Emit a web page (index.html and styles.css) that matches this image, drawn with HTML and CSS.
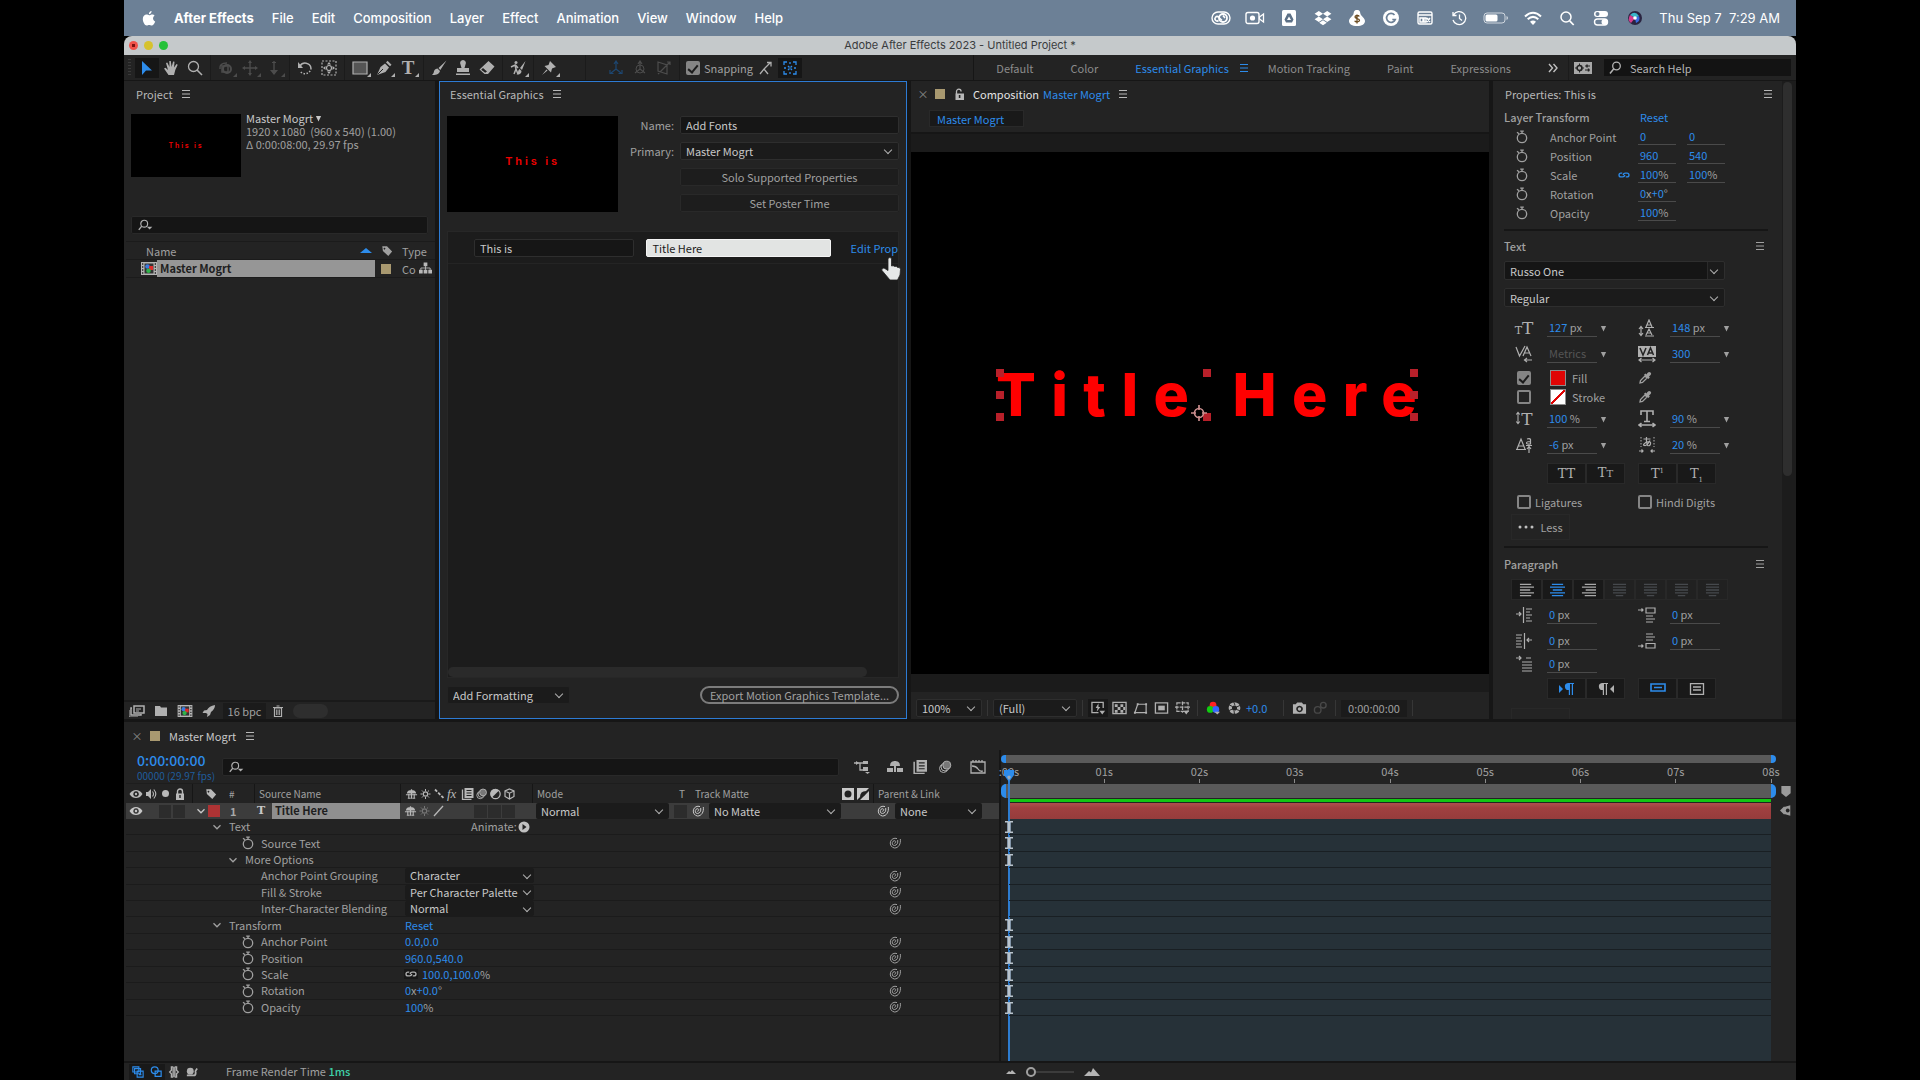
FILE: index.html
```html
<!DOCTYPE html>
<html lang="en">
<head>
  <meta charset="UTF-8" />
  <meta name="viewport" content="width=device-width, initial-scale=1.0" />
  <title>Adobe After Effects 2023 - Untitled Project *</title>
  <link rel="stylesheet" href="styles.css">
</head>
<body>

  <!-- Icon sprite -->
  <svg class="sprite" aria-hidden="true">
    <symbol id="i-menu" viewBox="0 0 10 10"><path d="M1 1.5h8M1 5h8M1 8.5h8" stroke="currentColor" stroke-width="1.2"/></symbol>
    <symbol id="i-search" viewBox="0 0 20 14"><circle cx="8" cy="5.5" r="3.8" fill="none" stroke="currentColor" stroke-width="1.3"/><path d="M5.3 8.3 2 12.5" stroke="currentColor" stroke-width="1.5"/><path d="M11 9h6l-3 3z" fill="currentColor"/></symbol>
    <symbol id="i-glass" viewBox="0 0 14 14"><circle cx="8.5" cy="5" r="3.8" fill="none" stroke="currentColor" stroke-width="1.3"/><path d="M5.8 7.8 2 12.5" stroke="currentColor" stroke-width="1.5"/></symbol>
    <symbol id="i-chev" viewBox="0 0 10 10"><path d="M1.5 3.2 5 6.8l3.5-3.6" fill="none" stroke="currentColor" stroke-width="1.3"/></symbol>
    <symbol id="i-tri" viewBox="0 0 8 8"><path d="M1 1h6L4 7.5z" fill="currentColor"/></symbol>
    <symbol id="i-tag" viewBox="0 0 14 14"><path fill-rule="evenodd" d="M1.5 1.5H7l6 6.2-4.5 5L2.2 7zM4 3.2a1 1 0 1 0 .1 0z" fill="currentColor"/></symbol>
    <symbol id="i-watch" viewBox="0 0 14 14"><circle cx="7" cy="8" r="4.7" fill="none" stroke="currentColor" stroke-width="1.3"/><path d="M5.2 1.2h3.6M7 1v2.5M2 2.2l2 1.6" stroke="currentColor" stroke-width="1.3"/></symbol>
    <symbol id="i-link" viewBox="0 0 16 10"><path d="M6 2.8H4.5a2.2 2.2 0 0 0 0 4.4h2q2 0 2.5-2.2M10 7.2h1.5a2.2 2.2 0 0 0 0-4.4h-2q-2 0-2.5 2.2" fill="none" stroke="currentColor" stroke-width="1.5"/></symbol>
    <symbol id="i-whip" viewBox="0 0 14 14"><path d="M9 2.6A4.9 4.9 0 1 0 6.5 12C10.500 12 13 8 12.300 3M6.300 7.300C8.500 7 8 4.500 6.300 4.700 3.300 5.200 3.800 9.700 6.500 9.500 9 9.300 10.200 7 9.700 4" fill="none" stroke="currentColor"/></symbol>
    <symbol id="i-eye" viewBox="0 0 14 10"><path fill-rule="evenodd" d="M.5 5C2.500 2 4.500 1 7 1s4.500 1 6.500 4C11.500 8 9.500 9 7 9S2.500 8 .5 5zM7 2.200a2.800 2.800 0 1 0 .1 0z" fill="currentColor"/><circle cx="7" cy="5" r="1.2" fill="currentColor"/></symbol>
    <symbol id="i-lock" viewBox="0 0 12 12"><path d="M3.500 6V3.500a2.500 2.500 0 0 1 5 0V6" fill="none" stroke="currentColor" stroke-width="1.4"/><path fill-rule="evenodd" d="M2 5.500h8V12H2zM5.300 7v3h1.400V7z" fill="currentColor"/></symbol>
    <symbol id="i-unlock" viewBox="0 0 12 12"><path d="M3.500 6V3.500a2.300 2.300 0 0 1 4.600 0" fill="none" stroke="currentColor" stroke-width="1.3"/><path fill-rule="evenodd" d="M2.500 5.500H11V12H2.500zM5.800 7v3h1.600V7z" fill="currentColor"/></symbol>
    <symbol id="i-speaker" viewBox="0 0 12 12"><path d="M1 4h2l3-3v10L3 8H1z" fill="currentColor"/><path d="M7.500 3.500q2 2.500 0 5M8.800 1.500q4 4.500 0 9" fill="none" stroke="currentColor" stroke-width="1.1"/></symbol>
    <symbol id="i-shy" viewBox="0 0 14 12"><path d="M2 5.500C2 .5 12 .5 12 5.500zM1 6.300h12v1H1zM6.300 1h1.400v10H6.300zM3 10h3v1.200H3zM8 10h3v1.200H8zM3.500 6h1.200v4H3.500zM9.300 6h1.200v4H9.300z" fill="currentColor"/></symbol>
    <symbol id="i-sun" viewBox="0 0 12 12"><circle cx="6" cy="6" r="2.2" fill="none" stroke="currentColor" stroke-width="1.2"/><path d="M6 1v2M6 9v2M1 6h2M9 6h2M2.500 2.500l1.300 1.300M8.200 8.200l1.300 1.300M9.500 2.500 8.200 3.800M3.800 8.200 2.500 9.500" stroke="currentColor"/></symbol>
    <symbol id="i-slash" viewBox="0 0 12 12"><path d="M1.500 11 10.500 1" stroke="currentColor" stroke-width="1.3"/></symbol>
    <symbol id="i-bslash" viewBox="0 0 12 12"><path d="m1.500 1.500 9 9" stroke="currentColor" stroke-width="1.8" stroke-dasharray="3 1.5"/></symbol>
    <symbol id="i-film" viewBox="0 0 12 12"><path fill-rule="evenodd" d="M3 0h9v10H3zM5 2v1h5V2zM5 4.500v1h5v-1zM5 7v1h5V7z" fill="currentColor"/><path d="M1 1.500v10h9" fill="none" stroke="currentColor" stroke-width="1.3"/></symbol>
    <symbol id="i-blur" viewBox="0 0 14 14"><circle cx="5.5" cy="8.5" r="4" fill="none" stroke="currentColor"/><circle cx="7" cy="7" r="4" fill="#232323" stroke="currentColor"/><circle cx="8.8" cy="5.2" r="4" fill="#777" stroke="currentColor"/></symbol>
    <symbol id="i-adjust" viewBox="0 0 12 12"><circle cx="6" cy="6" r="4.7" fill="none" stroke="currentColor" stroke-width="1.2"/><path d="M9.300 2.700A4.700 4.700 0 1 0 2.700 9.300z" fill="currentColor"/></symbol>
    <symbol id="i-cube" viewBox="0 0 12 12"><path d="m6 1 4.500 2v5.500L6 11 1.500 8.500V3zM1.500 3 6 5.200 10.500 3M6 5.200V11" fill="none" stroke="currentColor" stroke-width="1.2"/></symbol>
    <symbol id="i-comp" viewBox="0 0 16 13"><path d="M0 0h16v13H0z" fill="#b5b5b5"/><path d="M3.500 1.500h9v10h-9z" fill="#333"/><path d="M1 2h1.300M1 5h1.300M1 8h1.300M1 11h1.300M13.700 2H15M13.700 5H15M13.700 8H15M13.700 11H15" stroke="#222" stroke-width="1.5"/><circle cx="6.5" cy="4.5" r="2.3" fill="#3a7be0"/><path d="M8 4h4v4H8z" fill="#e02b2b"/><circle cx="7.5" cy="8.7" r="2.3" fill="#2fb34a"/></symbol>
    <symbol id="i-dropper" viewBox="0 0 14 14"><path d="m2 12 .5-2.500L7 5l2 2-4.500 4.500z" fill="none" stroke="currentColor" stroke-width="1.3"/><path d="M6 3.800 7.500 2.500l1 1C9.500 1.500 11 .3 12.500 1.600s.2 3-1.500 3.900l.8.900-1.500 1.500z" fill="currentColor"/></symbol>
    <symbol id="i-al" viewBox="0 0 16 14"><path d="M1 1h12M1 4h15M1 7h11M1 10h15M1 13h12" stroke="currentColor" stroke-width="1.4"/></symbol>
    <symbol id="i-ac" viewBox="0 0 16 14"><path d="M2 1h12M0 4h16M3 7h10M0 10h16M2 13h12" stroke="currentColor" stroke-width="1.4"/></symbol>
    <symbol id="i-ar" viewBox="0 0 16 14"><path d="M4 1h12M1 4h15M5 7h11M1 10h15M4 13h12" stroke="currentColor" stroke-width="1.4"/></symbol>
    <symbol id="i-aj" viewBox="0 0 16 14"><path d="M1 1h14M1 4h14M1 7h14M1 10h14M4 13h8" stroke="currentColor" stroke-width="1.4"/></symbol>
    <symbol id="i-key" viewBox="0 0 8 14"><path d="M2.500 2h3v10h-3z" fill="#6f9fd6"/><path d="M0 1h3.500l.5 1 .5-1H8v1.500H5.500v9H8V13H4.500L4 12l-.5 1H0v-1.500h2.500v-9H0z" fill="#b9c3cc"/></symbol>
  </svg>

  <div class="screen">

    <!-- macOS menu bar -->
    <header class="menubar">
      <nav class="menubar-left">
        <svg class="apple" viewBox="0 0 14 17"><path d="M9.600 1c.1 1.600-1.200 3.100-2.700 3.200C6.700 2.600 8.200 1.100 9.600 1zM12.600 5.800c-2.300 1.400-1.900 4.700.6 5.600-.7 2-2 4.200-3.500 4.200-1 0-1.400-.6-2.500-.6s-1.600.6-2.500.6C2.700 15.600.8 12 .8 9.100c0-3 1.900-4.500 3.700-4.500 1.100 0 2 .7 2.700.7.700 0 1.700-.8 3.100-.8.900 0 1.800.5 2.300 1.300z" fill="#fff"/></svg>
        <a href="#" class="app-name">After Effects</a>
        <a href="#">File</a>
        <a href="#">Edit</a>
        <a href="#">Composition</a>
        <a href="#">Layer</a>
        <a href="#">Effect</a>
        <a href="#">Animation</a>
        <a href="#">View</a>
        <a href="#">Window</a>
        <a href="#">Help</a>
      </nav>
      <div class="menubar-right">
        <svg viewBox="0 0 20 16"><rect x="1" y="2" width="18" height="12" rx="6" fill="none" stroke="#fff" stroke-width="1.4"/><circle cx="12" cy="8" r="4" fill="none" stroke="#fff" stroke-width="1.8"/><path d="M11 10.500 7.500 7a2.200 2.200 0 1 0 0 3.500M12 5.500l2 2.500" fill="none" stroke="#fff" stroke-width="1.6"/></svg>
        <svg viewBox="0 0 20 16"><rect x="1" y="2.5" width="13" height="11" rx="2" fill="none" stroke="#fff" stroke-width="1.4"/><circle cx="7.5" cy="8" r="2.6" fill="#fff"/><path d="m14.500 7 4-3v8l-4-3z" fill="none" stroke="#fff" stroke-width="1.3"/></svg>
        <svg viewBox="0 0 20 16"><rect x="3" y="0" width="14" height="16" rx="1.5" fill="#fff"/><path d="M8.500 3.500h3l3 6-1.500 3H7l-1.500-3zM10 6.500 8 10h4z" fill="#5c7086" fill-rule="evenodd"/></svg>
        <svg viewBox="0 0 20 16"><path d="m5.800 1 4.200 2.700-4.200 2.700-4.200-2.700zM14.200 1l4.200 2.700-4.200 2.700L10 3.700zM5.800 6.500 10 9.200l-4.200 2.700-4.200-2.700zM14.200 6.500l4.200 2.700-4.200 2.700L10 9.200zM10 10.200l3.800 2.500L10 15.200l-3.800-2.500z" fill="#fff"/></svg>
        <svg viewBox="0 0 20 16"><path d="M10 0c3 0 3 2 3.500 4S18 8 18 11s-3 5-8 5-8-2-8-5 4-5 4.500-7S7 0 10 0z" fill="#fff"/><path d="M12.300 6.500C11.500 5 8 5.200 8 7s4.500 1.300 4.500 3.300-4 2.200-4.800.5M10 4.500v9" fill="none" stroke="#6b4c22" stroke-width="1.3"/></svg>
        <svg viewBox="0 0 20 16"><circle cx="10" cy="8" r="8" fill="#fff"/><path d="M13.500 5a4.500 4.500 0 1 0 .8 4.500h-3" fill="none" stroke="#6c8096" stroke-width="1.7"/></svg>
        <svg viewBox="0 0 20 16"><rect x="3" y="2" width="14" height="12" rx="1.5" fill="none" stroke="#fff" stroke-width="1.4"/><path d="M3 5h14M5 8h3v4H5zM9 8h2v4H9zM12 8l3 4M15 8l-3 4" fill="none" stroke="#fff" stroke-width="1.4"/></svg>
        <svg viewBox="0 0 20 16"><path d="M4.500 5A6.500 6.500 0 1 1 4 10M4 2v3.500h3.500M10.500 4.500V8.500l2.500 2" fill="none" stroke="#fff" stroke-width="1.3"/></svg>
        <svg class="battery" viewBox="0 0 26 12"><rect x="1" y="1" width="21" height="10" rx="3" fill="none" stroke="#cfd6de"/><rect x="2.5" y="2.5" width="12" height="7" rx="1.5" fill="#fff"/><path d="M23.500 4v4q1.500-.5 1.500-2t-1.500-2z" fill="#cfd6de"/></svg>
        <svg viewBox="0 0 20 16"><path d="M2 6.500q8-7.500 16 0M4.700 9.300q5.300-4.800 10.600 0" fill="none" stroke="#fff" stroke-width="2"/><path d="m10 15-3-3.300q3-2.200 6 0z" fill="#fff"/></svg>
        <svg viewBox="0 0 20 16"><circle cx="9" cy="7" r="5" fill="none" stroke="#fff" stroke-width="1.5"/><path d="m12.700 10.800 4 4.200" stroke="#fff" stroke-width="1.7"/></svg>
        <svg viewBox="0 0 20 16"><rect x="3" y="1" width="14" height="6" rx="3" fill="#fff"/><circle cx="6.5" cy="4" r="2" fill="#6c8096"/><rect x="3.5" y="9" width="13" height="6" rx="3" fill="none" stroke="#fff" stroke-width="1.4"/><circle cx="13.5" cy="12" r="3" fill="#fff"/></svg>
        <svg viewBox="0 0 20 16"><circle cx="10" cy="8" r="7" fill="#2a2440"/><path d="M5 5q5-5 9 1L10 8z" fill="#39b6c9"/><path d="M5 5q-3 5 1 8l4-5z" fill="#d43b8b"/><path d="M14 6q2 5-3 7L10 8z" fill="#3a6be0"/><circle cx="10" cy="8" r="1.8" fill="#fff"/></svg>
        <time>Thu Sep 7&nbsp; 7:29 AM</time>
      </div>
    </header>

    <div class="app">

      <div class="titlebar">
        <div class="lights"><i class="light red"></i><i class="light yellow"></i><i class="light green"></i></div>
        <h1>Adobe After Effects 2023 - Untitled Project *</h1>
      </div>

      <!-- Tools + workspaces -->
      <div class="toolbar">
        <div class="tools">
          <span class="grip"></span>
          <button class="tool on" aria-label="Selection"><svg viewBox="0 0 16 16"><path d="M3 1v14l4-4.500h6z" fill="#2d8ceb"/></svg></button>
          <button class="tool" aria-label="Hand"><svg viewBox="0 0 16 16"><path d="M5.500 15 1 8.500l1.500-.8L5 10 3 3l1.300-.5L6.500 7 6.300 1h1.500L8.600 7l1.500-5.500 1.400.3L11 7.500l2.500-3.500 1.200.7L12.300 10 11 15z" fill="currentColor"/></svg></button>
          <button class="tool" aria-label="Zoom"><svg viewBox="0 0 16 16"><circle cx="6.5" cy="6.5" r="5" fill="none" stroke="currentColor" stroke-width="1.3"/><path d="m10 10 5 5" stroke="currentColor" stroke-width="1.6"/></svg></button>
          <i class="sep"></i>
          <button class="tool off corner" aria-label="Orbit"><svg viewBox="0 0 16 16"><circle cx="9" cy="9" r="4" fill="none" stroke="currentColor" stroke-width="2"/><path d="M2 9q-1-6 7-6M4 6h6v6H4z" fill="none" stroke="currentColor" stroke-width="1.5"/></svg></button>
          <button class="tool off corner" aria-label="Pan"><svg viewBox="0 0 16 16"><path d="M8 0 6 3h4zM8 16l2-3H6zM0 8l3 2V6zM16 8l-3-2v4zM7.300 3h1.400v10H7.300zM3 7.300h10v1.400H3z" fill="currentColor"/></svg></button>
          <button class="tool off corner" aria-label="Dolly"><svg viewBox="0 0 16 16"><path d="M7.300 1h1.400v10H7.300zM4 10h8l-4 5zM6 2h4v1H6z" fill="currentColor"/></svg></button>
          <i class="sep"></i>
          <button class="tool" aria-label="Rotate"><svg viewBox="0 0 16 16"><path d="M3 6a6 6 0 0 1 11 2" fill="none" stroke="currentColor" stroke-width="1.5"/><path d="M1 2v6h5z" fill="currentColor"/><path d="M14 8a6 6 0 0 1-11 3" fill="none" stroke="currentColor" stroke-width="1.5" stroke-dasharray="1.5 1.5"/></svg></button>
          <button class="tool" aria-label="Pan Behind"><svg viewBox="0 0 16 16"><path d="M1 1h14v14H1z" fill="none" stroke="currentColor" stroke-width="1.2" stroke-dasharray="2 1.5"/><circle cx="8" cy="8" r="2.5" fill="none" stroke="currentColor" stroke-width="1.2"/><path d="m8 2 2 2.500H6zM8 14l2-2.500H6zM2 8l2.500 2V6zM14 8l-2.500 2V6z" fill="currentColor"/></svg></button>
          <i class="sep"></i>
          <button class="tool corner" aria-label="Rectangle"><svg viewBox="0 0 16 16"><path d="M1 2h14v12H1z" fill="#555" stroke="currentColor" stroke-width="1.2"/></svg></button>
          <button class="tool corner" aria-label="Pen"><svg viewBox="0 0 16 16"><path d="M1 15 4.500 7 9 3.500 13 7.500 9.500 12z" fill="currentColor"/><path d="M1.500 14.500 7 9" stroke="#232323"/><path d="m10 2.500 1.500-1.800 4 4L14 6.200z" fill="currentColor"/></svg></button>
          <button class="tool corner glyph" aria-label="Type">T</button>
          <i class="sep"></i>
          <button class="tool" aria-label="Brush"><svg viewBox="0 0 16 16"><path d="m15.500.5-8 7.500 1.800 2zM6.500 8.500 9 11c-1 4-5 4-8 4 2-1.500 1.500-3 2.500-5q1.200-1.500 3-1.500z" fill="currentColor"/></svg></button>
          <button class="tool" aria-label="Clone Stamp"><svg viewBox="0 0 16 16"><path d="M8 0a3 3 0 0 1 2.500 4.500L9.500 8H14v4H2V8h4.500l-1-3.500A3 3 0 0 1 8 0zM1 13.500h14V15H1z" fill="currentColor"/></svg></button>
          <button class="tool" aria-label="Eraser"><svg viewBox="0 0 16 16"><path d="m9.500 1 6 5.500L9 14H5.500L.5 9.500zM4 8l-1.800 1.700 4 3L8 11.500z" fill="currentColor" fill-rule="evenodd"/></svg></button>
          <i class="sep"></i>
          <button class="tool corner" aria-label="Roto Brush"><svg viewBox="0 0 16 16"><circle cx="6" cy="2.5" r="1.5" fill="currentColor"/><path d="m1 7 4-2 1 4-2 5M5.500 5 8 8M6 9l2 5" fill="none" stroke="currentColor" stroke-width="1.5"/><path d="M15.500 1 10 8l2 2zM9.500 9l2 2c0 3-3 4-5 3.500 2-1 1-4 3-5.500z" fill="currentColor"/></svg></button>
          <i class="sep"></i>
          <button class="tool corner" aria-label="Puppet Pin"><svg viewBox="0 0 16 16"><path d="m9 1 6 6-1.500.5L11 8.500l-1 4L3.500 6l4-1zM5.500 9.500 1 15l5.500-4.500z" fill="currentColor"/></svg></button>
          <i class="sep far"></i>
          <button class="tool off blue" aria-label="Local Axis"><svg viewBox="0 0 16 16"><path d="M8 9V2M8 9l-5 4M8 9l5 4M6 4l2-3 2 3M2 10v3.500h3.500M14 10v3.500h-3.500" fill="none" stroke="currentColor" stroke-width="1.2"/></svg></button>
          <button class="tool off" aria-label="World Axis"><svg viewBox="0 0 16 16"><circle cx="8" cy="9" r="4" fill="none" stroke="currentColor"/><path d="M8 9V2M8 9l-5 4M8 9l5 4M6 4l2-3 2 3" fill="none" stroke="currentColor" stroke-width="1.2"/></svg></button>
          <button class="tool off" aria-label="View Axis"><svg viewBox="0 0 16 16"><path d="M2 2v9l9 3V5zM2 14 14 2M11 2h3v3" fill="none" stroke="currentColor" stroke-width="1.2"/></svg></button>
          <i class="sep"></i>
          <label class="check snapping"><input type="checkbox" checked> Snapping</label>
          <button class="tool" aria-label="Snap Edges"><svg viewBox="0 0 16 16"><path d="m2 14 4-5 4 5M6 9l6-6M9 2.500h4v4" fill="none" stroke="currentColor" stroke-width="1.3"/></svg></button>
          <button class="tool on" aria-label="Snap Inside"><svg viewBox="0 0 16 16"><path d="M2 5V2h3M11 2h3v3M14 11v3h-3M5 14H2v-3M6 6l1.500 1.500M10 6 8.500 7.500M6 10l1.500-1.500M10 10 8.500 8.500M2 8h2M12 8h2M8 2v2M8 12v2" fill="none" stroke="#2d8ceb" stroke-width="1.3"/></svg></button>
        </div>
        <nav class="workspaces">
          <a href="#">Default</a>
          <a href="#">Color</a>
          <a href="#" class="active">Essential Graphics <svg class="ic-menu"><use href="#i-menu"/></svg></a>
          <a href="#">Motion Tracking</a>
          <a href="#">Paint</a>
          <a href="#">Expressions</a>
          <button class="more" aria-label="More workspaces"><svg viewBox="0 0 10 10"><path d="m1 1 3.500 4L1 9M5.500 1 9 5 5.500 9" fill="none" stroke="currentColor" stroke-width="1.4"/></svg></button>
        </nav>
        <div class="help">
          <svg class="sync" viewBox="0 0 18 12"><path d="M0 0h18v12H0z" fill="#a8a8a8"/><circle cx="5.5" cy="6" r="2.5" fill="none" stroke="#222" stroke-width="1.7"/><path d="M5.500 1.500v9M1 6h9" stroke="#222" stroke-dasharray="1.5 6"/><path d="M11 4h5M11 8h5" stroke="#222" stroke-width="1.2"/><path d="M13 2.500v3M14.500 6.500v3" stroke="#222" stroke-width="1.5"/></svg>
          <label class="help-search"><svg class="ic-14"><use href="#i-glass"/></svg><input type="text" value="Search Help" aria-label="Search Help"></label>
        </div>
      </div>

      <div class="workspace">

        <!-- Project panel -->
        <section class="panel project">
          <div class="tab">Project <svg class="ic-menu"><use href="#i-menu"/></svg></div>
          <div class="project-info">
            <div class="thumb"><span>This is</span></div>
            <div class="info-lines">
              <p class="bright">Master Mogrt<svg class="ic-7"><use href="#i-tri"/></svg></p>
              <p>1920 x 1080&nbsp; (960 x 540) (1.00)</p>
              <p>&Delta; 0:00:08:00, 29.97 fps</p>
            </div>
          </div>
          <label class="searchbox"><svg class="ic-search"><use href="#i-search"/></svg><input type="text" aria-label="Search project"></label>
          <table class="files">
            <thead>
              <tr><th class="c-name"><div>Name<i class="sort"></i></div></th><th class="c-tag"><svg class="ic-12"><use href="#i-tag"/></svg></th><th class="c-type">Type</th></tr>
            </thead>
            <tbody>
              <tr>
                <td class="c-name"><div class="file"><svg class="ic-comp"><use href="#i-comp"/></svg><b>Master Mogrt</b></div></td>
                <td class="c-tag"><i class="swatch"></i></td>
                <td class="c-type"><div class="clip"><span>Co</span><svg class="flow" viewBox="0 0 14 12"><path d="M5 0h4v4H5zM0 8h4v4H0zM5 8h4v4H5zM10 8h4v4h-4z" fill="currentColor"/><path d="M7 4v4M2 8V6h10v2" fill="none" stroke="currentColor"/></svg></div></td>
              </tr>
            </tbody>
          </table>
          <div class="project-foot">
            <button aria-label="Interpret Footage"><svg viewBox="0 0 16 12"><path d="M5 1h10v7H5zM3 3H2v7h10V9" fill="none" stroke="currentColor" stroke-width="1.5"/><path d="M7 4h5M7 6h3M0 5v7h9" fill="none" stroke="currentColor"/></svg></button>
            <button aria-label="New Folder"><svg viewBox="0 0 16 12"><path d="M2 1h5l1 1.500h6V11H2z" fill="currentColor"/></svg></button>
            <button aria-label="New Composition"><svg><use href="#i-comp"/></svg></button>
            <button aria-label="Adjust"><svg viewBox="0 0 16 12"><path d="M14 0Q8 1 6 5L3 5.500 1.500 8 5 8l1.500 1L6 12l3-2 1-3q4-3 4-7z" fill="currentColor"/></svg></button>
            <button class="depth">16 bpc</button>
            <button aria-label="Delete"><svg viewBox="0 0 16 12"><path d="M4.500 3h7v8.500h-7zM3 2.500h10M6.500 1h3M6.800 4.500V10M9.200 4.500V10" fill="none" stroke="currentColor" stroke-width="1.2"/></svg></button>
            <i class="pill"></i>
          </div>
        </section>

        <!-- Essential Graphics panel -->
        <section class="panel graphics">
          <div class="tab">Essential Graphics <svg class="ic-menu"><use href="#i-menu"/></svg></div>
          <div class="graphics-head">
            <div class="thumb big"><span>This is</span></div>
            <div class="graphics-form">
              <label for="gname">Name:</label>
              <input id="gname" type="text" class="field" value="Add Fonts">
              <label for="gprimary">Primary:</label>
              <span class="select"><select id="gprimary"><option>Master Mogrt</option></select></span>
              <button class="wide">Solo Supported Properties</button>
              <button class="wide">Set Poster Time</button>
            </div>
          </div>
          <div class="graphics-list">
            <div class="graphics-item">
              <input type="text" class="field" value="This is" aria-label="Property name">
              <input type="text" class="field light" value="Title Here" aria-label="Source text">
              <a href="#">Edit Prop</a>
              <svg class="cursor" viewBox="0 0 22 26"><path d="M8 2.500q2-2 3.500 0V10q2-.8 3 .5 2-.7 3 .9 2.800-.5 3 2l-.5 5.600-2.500 5H10L2 14.500q-1-2.500 2-2.500l4 2.500z" fill="#e6e8e8" stroke="#222" stroke-width=".8"/></svg>
            </div>
            <i class="hscroll"></i>
          </div>
          <div class="graphics-foot">
            <span class="select"><select aria-label="Add Formatting"><option>Add Formatting</option></select></span>
            <button class="export">Export Motion Graphics Template...</button>
          </div>
        </section>

        <!-- Composition viewer -->
        <section class="panel comp">
          <div class="tab">
            <button class="close" aria-label="Close">×</button>
            <i class="swatch"></i>
            <svg class="ic-12"><use href="#i-unlock"/></svg>
            <span class="white">Composition</span> <a href="#">Master Mogrt</a>
            <svg class="ic-menu"><use href="#i-menu"/></svg>
          </div>
          <div class="comp-nav"><button>Master Mogrt</button></div>
          <div class="viewer">
            <div class="canvas">
              <div class="title-layer">
                Title Here
                <i class="h tl"></i><i class="h tc"></i><i class="h tr"></i><i class="h ml"></i><i class="h mr"></i><i class="h bl"></i><i class="h bc"></i><i class="h br"></i>
              </div>
              <svg class="anchor" viewBox="0 0 18 18"><circle cx="9" cy="9" r="4.5" fill="none" stroke="#c98d8d" stroke-width="1.7"/><path d="M9 1v5M9 12v5M1 9h5M12 9h5" stroke="#c98d8d" stroke-width="1.7"/></svg>
            </div>
          </div>
          <div class="comp-foot">
            <span class="select w66"><select aria-label="Magnification"><option>100%</option></select></span>
            <i class="sep"></i>
            <span class="select w84"><select aria-label="Resolution"><option>(Full)</option></select></span>
            <i class="sep"></i>
            <div class="comp-icons">
              <button class="dark" aria-label="Fast Previews"><svg viewBox="0 0 16 14"><path d="M13 7V1H1v11h7" fill="none" stroke="currentColor" stroke-width="1.4"/><path d="M8 2 5 7h2l-1 4 4-5H8zM9 10h6l-3 4z" fill="currentColor"/></svg></button>
              <button aria-label="Transparency Grid"><svg viewBox="0 0 16 14"><path d="M1 1h14v12H1z" fill="none" stroke="currentColor" stroke-width="1.4"/><path d="M3 3h3v3H3zM9 3h3v3H9zM6 6h3v3H6zM12 6h2v3h-2zM3 9h3v3H3zM9 9h3v3H9z" fill="currentColor"/></svg></button>
              <button aria-label="Mask Visibility"><svg viewBox="0 0 16 14"><path d="M2 12 5 3h9v9z" fill="none" stroke="currentColor" stroke-width="1.3"/><path d="M4 2h2v2H4zM13 2h2v2h-2zM1 11h2v2H1zM13 11h2v2h-2z" fill="currentColor"/></svg></button>
              <button aria-label="Region"><svg viewBox="0 0 16 14"><path d="M1.500 1.500h13v11h-13z" fill="none" stroke="currentColor" stroke-width="1.4"/><path d="M4.500 4.500h7v5h-7z" fill="currentColor"/></svg></button>
              <button aria-label="Guides"><svg viewBox="0 0 16 14"><path d="M2 1.500h12v9H2zM8 0v12M0 6h16" fill="none" stroke="currentColor" stroke-width="1.3" stroke-dasharray="4 1"/><path d="M9 10h6l-3 4z" fill="currentColor"/></svg></button>
            </div>
            <i class="sep"></i>
            <div class="comp-icons">
              <button aria-label="Channels"><svg viewBox="0 0 16 14"><circle cx="7.5" cy="4" r="3.6" fill="#f22"/><circle cx="4.5" cy="8.5" r="3.6" fill="#1c1"/><circle cx="10.5" cy="8.5" r="3.6" fill="#36f"/><path d="M9 11h6l-3 3z" fill="currentColor"/></svg></button>
              <button aria-label="Reset Exposure"><svg viewBox="0 0 16 14"><circle cx="8" cy="7" r="4.5" fill="none" stroke="currentColor" stroke-width="3.5"/><path d="m7 0 1.500 4M14.500 4 10 6M14 10l-4-1.500M8 14 7.500 10M1.500 10 6 8M2 3.500 6 5.500" stroke="#232323"/></svg></button>
            </div>
            <a href="#" class="exposure">+0.0</a>
            <i class="sep"></i>
            <div class="comp-icons">
              <button aria-label="Take Snapshot"><svg viewBox="0 0 16 14"><path fill-rule="evenodd" d="M1 3h3l1.500-2h5L12 3h3v10H1zM8 4.500a3.500 3.500 0 1 0 .1 0z" fill="currentColor"/><circle cx="8" cy="8" r="1.8" fill="currentColor"/></svg></button>
              <button class="dim" aria-label="Show Snapshot"><svg viewBox="0 0 16 14"><circle cx="5" cy="9" r="3.5" fill="none" stroke="currentColor" stroke-width="1.5"/><circle cx="11" cy="4" r="3" fill="none" stroke="currentColor" stroke-width="1.5"/></svg></button>
            </div>
            <i class="sep"></i>
            <button class="timebox">0:00:00:00</button>
            <i class="sep"></i>
          </div>
        </section>

        <!-- Properties panel -->
        <section class="panel props">
          <div class="props-body">
            <div class="tab">Properties: This is <svg class="ic-menu"><use href="#i-menu"/></svg></div>
            <div class="xform">
              <h2>Layer Transform</h2><a href="#">Reset</a>
              <div class="xrow"><svg class="ic-14"><use href="#i-watch"/></svg><span>Anchor Point</span><i></i><b>0</b><b>0</b></div>
              <div class="xrow"><svg class="ic-14"><use href="#i-watch"/></svg><span>Position</span><i></i><b>960</b><b>540</b></div>
              <div class="xrow"><svg class="ic-14"><use href="#i-watch"/></svg><span>Scale</span><svg class="ic-link"><use href="#i-link"/></svg><b>100<em>%</em></b><b>100<em>%</em></b></div>
              <div class="xrow"><svg class="ic-14"><use href="#i-watch"/></svg><span>Rotation</span><i></i><b>0<em>x</em>+0<em>°</em></b></div>
              <div class="xrow"><svg class="ic-14"><use href="#i-watch"/></svg><span>Opacity</span><i></i><b>100<em>%</em></b></div>
            </div>
            <div class="section-head">Text <svg class="ic-menu"><use href="#i-menu"/></svg></div>
            <span class="select font split"><select aria-label="Font"><option>Russo One</option></select></span>
            <span class="select font"><select aria-label="Font style"><option>Regular</option></select></span>
            <div class="chars">
              <span class="gi"><small>T</small><big>T</big></span><b>127 <em>px</em></b><svg class="ic-7"><use href="#i-tri"/></svg>
              <svg class="gi" viewBox="0 0 18 18"><path d="M3 8v8M1 10l2-2.500L5 10M1 14l2 2.500L5 14M8 8l3-7 3 7M9 6h4M7 8.500h9M8 16l3-6 3 6M9 14h4M7 17h9" fill="none" stroke="currentColor" stroke-width="1.2"/></svg><b>148 <em>px</em></b><svg class="ic-7"><use href="#i-tri"/></svg>

              <svg class="gi" viewBox="0 0 18 18"><path d="m1 2 3.500 9L10 1M8 11l4-9 4 9M9.500 8h5M10 15h7M12 13l-2.500 2L12 17" fill="none" stroke="currentColor" stroke-width="1.2"/></svg><b><s>Metrics</s></b><svg class="ic-7"><use href="#i-tri"/></svg>
              <svg class="gi" viewBox="0 0 18 18"><path d="M0 1h18v11H0z" fill="currentColor"/><path d="m2 3 3 7 3-7M9.500 10l3-7 3 7M10.500 8h4" fill="none" stroke="#232323" stroke-width="1.5"/><path d="M1 15h16M3.500 13 1 15l2.500 2M14.500 13l2.500 2-2.500 2" fill="none" stroke="currentColor" stroke-width="1.2"/></svg><b>300</b><svg class="ic-7"><use href="#i-tri"/></svg>
            </div>
            <div class="paints">
              <input type="checkbox" id="fill" checked><label for="fill"><i class="chip red"></i>Fill</label><svg class="ic-14"><use href="#i-dropper"/></svg>
              <input type="checkbox" id="stroke"><label for="stroke"><i class="chip none"></i>Stroke</label><svg class="ic-14"><use href="#i-dropper"/></svg>
            </div>
            <div class="chars">
              <span class="gi"><svg class="ic-updown" viewBox="0 0 6 16"><path d="M3 2v12M1 4l2-2.500L5 4M1 12l2 2.500L5 12" fill="none" stroke="currentColor" stroke-width="1.2"/></svg><big>T</big></span><b>100 <em>%</em></b><svg class="ic-7"><use href="#i-tri"/></svg>
              <svg class="gi" viewBox="0 0 18 18"><path d="M3 5V1h12v4M9 1v10M6 11.500h6M1 15h16M3.500 13 1 15l2.500 2M14.500 13l2.500 2-2.500 2" fill="none" stroke="currentColor" stroke-width="1.6"/></svg><b>90 <em>%</em></b><svg class="ic-7"><use href="#i-tri"/></svg>

              <svg class="gi" viewBox="0 0 18 18"><path d="m2 13 4-10 4 10M3 10h6M1 13.500h10M12 3q3-1 3.500 .5V8q-4 .5-4-1t4-1.500M14 17v-6M12 13l2-2.500L16 13M11 9.500h6" fill="none" stroke="currentColor" stroke-width="1.2"/></svg><b>-6 <em>px</em></b><svg class="ic-7"><use href="#i-tri"/></svg>
              <svg class="gi" viewBox="0 0 18 18"><path d="M5.500 3h7M8.500 1q-.5 6 1.500 9M12 4.500Q9 10 6.500 9.500T8.500 6q5-1 4 2-.3 1.300-2 2M1 15h4M3.500 13.500 5 15l-1.500 1.500M17 15h-4M14.500 13.500 13 15l1.500 1.500" fill="none" stroke="currentColor" stroke-width="1.2"/><path d="M3 1v10M16 1v10" stroke="currentColor" stroke-dasharray="1.5 1.5"/></svg><b>20 <em>%</em></b><svg class="ic-7"><use href="#i-tri"/></svg>
            </div>
            <div class="caps">
              <div class="pair"><button>TT</button><button><span>T<small>T</small></span></button></div>
              <div class="pair"><button><span>T<sup>1</sup></span></button><button><span>T<sub>1</sub></span></button></div>
            </div>
            <div class="opts">
              <label class="check"><input type="checkbox"> Ligatures</label>
              <label class="check"><input type="checkbox"> Hindi Digits</label>
            </div>
            <button class="less"><svg viewBox="0 0 16 4"><circle cx="2" cy="2" r="1.5"/><circle cx="8" cy="2" r="1.5"/><circle cx="14" cy="2" r="1.5"/></svg>Less</button>
            <div class="section-head para">Paragraph <svg class="ic-menu"><use href="#i-menu"/></svg></div>
            <div class="aligns">
              <button aria-label="Left"><svg><use href="#i-al"/></svg></button>
              <button aria-label="Center" class="on"><svg><use href="#i-ac"/></svg></button>
              <button aria-label="Right"><svg><use href="#i-ar"/></svg></button>
              <button aria-label="Justify last left" disabled><svg><use href="#i-aj"/></svg></button>
              <button aria-label="Justify last center" disabled><svg><use href="#i-aj"/></svg></button>
              <button aria-label="Justify last right" disabled><svg><use href="#i-aj"/></svg></button>
              <button aria-label="Justify all" disabled><svg><use href="#i-aj"/></svg></button>
            </div>
            <div class="chars indents">
              <svg class="gi" viewBox="0 0 18 18"><path d="M1 8h5M4 6l2 2-2 2M8.500 1v16M11 3h6M11 6h4M11 9h6M11 12h4M11 15h6" fill="none" stroke="currentColor" stroke-width="1.2"/></svg><b>0 <em>px</em></b><i></i>
              <svg class="gi" viewBox="0 0 18 18"><path d="M0 4h5M3.500 2.500 5 4 3.500 5.500M8 2h9v5H8zM8 10h7M8 13h9M8 16h7" fill="none" stroke="currentColor" stroke-width="1.2"/></svg><b>0 <em>px</em></b><i></i>
              <svg class="gi" viewBox="0 0 18 18"><path d="M17 8h-5M14 6l-2 2 2 2M9.500 1v16M1 3h6M1 6h5M1 9h6M1 12h5M1 15h6" fill="none" stroke="currentColor" stroke-width="1.2"/></svg><b>0 <em>px</em></b><i></i>
              <svg class="gi" viewBox="0 0 18 18"><path d="M0 14h5M3.500 12.500 5 14l-1.500 1.500M8 11.500h9v4.500H8zM8 2h7M8 5h9M8 8h7" fill="none" stroke="currentColor" stroke-width="1.2"/></svg><b>0 <em>px</em></b><i></i>
            </div>
            <div class="chars first">
              <svg class="gi" viewBox="0 0 18 18"><path d="M1 3h5M4 1l2 2-2 2M11 3h5M7 7h10M7 10h10M7 13h10M7 16h10" fill="none" stroke="currentColor" stroke-width="1.2"/></svg><b>0 <em>px</em></b>
            </div>
            <div class="caps dirs">
              <div class="pair">
                <button class="on" aria-label="Left to right"><svg viewBox="0 0 16 12"><path d="m0 2 4 4-4 4zM9 0h6v1h-1v11h-1.200V1H11v11H9.800V7a3.500 3.500 0 0 1-.8-7z" fill="currentColor"/></svg></button>
                <button aria-label="Right to left"><svg viewBox="0 0 16 12"><path d="m16 2-4 4 4 4zM4 0h6v1H9v11H7.800V1H6v11H4.800V7A3.500 3.500 0 0 1 4 0z" fill="currentColor"/></svg></button>
              </div>
              <div class="pair"><button class="on" aria-label="Single line"><svg viewBox="0 0 16 12"><path d="M1 1h14v7H1zM4 4.500h8" fill="none" stroke="currentColor" stroke-width="1.6"/></svg></button><button aria-label="Every line"><svg viewBox="0 0 16 12"><path d="M1.500.7h13v10.600h-13zM4 4h8M4 7h8" fill="none" stroke="currentColor" stroke-width="1.3"/></svg></button></div>
            </div>
            <button class="less last" aria-label="More options"></button>
          </div>
          <div class="vscroll"><i></i></div>
        </section>
      </div>

      <!-- Timeline -->
      <section class="panel timeline">
        <div class="tab">
          <button class="close" aria-label="Close timeline">×</button><i class="swatch"></i><span>Master Mogrt</span><svg class="ic-menu"><use href="#i-menu"/></svg>
        </div>
        <div class="tl-main">
          <div class="tl-left">
            <div class="tl-top">
              <div class="timecode"><strong>0:00:00:00</strong><span>00000 (29.97 fps)</span></div>
              <label class="searchbox"><svg class="ic-search"><use href="#i-search"/></svg><input type="text" aria-label="Search layers"></label>
              <div class="tl-tools">
                <button aria-label="Mini-flowchart"><svg viewBox="0 0 16 14"><path d="M0 3h10M6 3v7h5" fill="none" stroke="currentColor" stroke-width="1.3"/><path d="m2 1 3 2-3 2zM9 1h5v3H9zM9 7h5v4H9zM11 12h5l-2.500 2z" fill="currentColor"/></svg></button>
                <button aria-label="Hide Shy" class="gap"><svg viewBox="0 0 16 14"><path d="M3 6q0-5 5-5t5 5zM7 1h2v11H7zM0 8h6v4H0zM10 8h6v4h-6z" fill="currentColor"/></svg></button>
                <button aria-label="Frame Blending"><svg><use href="#i-film"/></svg></button>
                <button aria-label="Motion Blur"><svg><use href="#i-blur"/></svg></button>
                <button aria-label="Graph Editor" class="gap"><svg viewBox="0 0 16 14"><path d="M1 2h14v11H1zM2 6q4 0 6 3t5 2M3 2V0M6 2V0M9 2V0M12 2V0" fill="none" stroke="currentColor" stroke-width="1.3"/></svg></button>
              </div>
            </div>
            <div class="cols head">
              <div class="c-av"><svg class="ic-14"><use href="#i-eye"/></svg><svg class="ic-12"><use href="#i-speaker"/></svg><i class="dot"></i><svg class="ic-12"><use href="#i-lock"/></svg></div>
              <div class="c-label"><svg class="ic-12"><use href="#i-tag"/></svg><span>#</span></div>
              <div class="c-source">Source Name</div>
              <div class="c-switch"><svg><use href="#i-shy"/></svg><svg><use href="#i-sun"/></svg><svg><use href="#i-bslash"/></svg><span class="fx">fx</span><svg><use href="#i-film"/></svg><svg><use href="#i-blur"/></svg><svg><use href="#i-adjust"/></svg><svg><use href="#i-cube"/></svg></div>
              <div class="c-mode">Mode</div>
              <div class="c-matte"><span class="t">T</span>Track Matte</div>
              <div class="c-inv"><svg class="ic-12" viewBox="0 0 12 12"><path d="M0 0h12v12H0z" fill="#c8c8c8"/><circle cx="6" cy="6" r="3.5" fill="#222"/></svg><svg class="ic-12" viewBox="0 0 12 12"><path d="M0 0h12L0 12zM12 3v9H3z" fill="#c8c8c8"/><path d="M3 9q0-6 6-6L8 7q-2 2-5 2z" fill="#222"/></svg></div>
              <div class="c-parent">Parent &amp; Link</div>
            </div>
            <div class="cols layer">
              <div class="c-av"><svg class="ic-14"><use href="#i-eye"/></svg><i></i><i class="cell"></i><i class="cell"></i></div>
              <div class="c-label"><svg class="ic-10"><use href="#i-chev"/></svg><i class="redbox"></i><b>1</b></div>
              <div class="c-source"><span class="serif">T</span><b>Title Here</b></div>
              <div class="c-switch"><svg><use href="#i-shy"/></svg><svg class="dim"><use href="#i-sun"/></svg><svg><use href="#i-slash"/></svg><i></i><i></i><i class="cell"></i><i class="cell"></i><i class="cell"></i></div>
              <div class="c-mode"><span class="select"><select aria-label="Mode"><option>Normal</option></select></span></div>
              <div class="c-matte"><i class="cell"></i><svg class="ic-14"><use href="#i-whip"/></svg><span class="select"><select aria-label="Track Matte"><option>No Matte</option></select></span></div>
              <div class="c-inv"></div>
              <div class="c-parent"><svg class="ic-14"><use href="#i-whip"/></svg><span class="select"><select aria-label="Parent"><option>None</option></select></span></div>
            </div>
            <div class="rows">
              <div class="row l1"><div><svg class="ic-10"><use href="#i-chev"/></svg>Text</div><span class="animate">Animate:<svg viewBox="0 0 12 12"><circle cx="6" cy="6" r="5.5" fill="#c0c0c0"/><path d="m4.500 3 4 3-4 3z" fill="#222"/></svg></span></div>
              <div class="row l2"><div><svg class="ic-14"><use href="#i-watch"/></svg>Source Text</div><span></span><svg class="ic-14"><use href="#i-whip"/></svg></div>
              <div class="row l2 sub"><div><svg class="ic-10"><use href="#i-chev"/></svg>More Options</div></div>
              <div class="row l3"><div>Anchor Point Grouping</div><span class="select"><select aria-label="Anchor Point Grouping"><option>Character</option></select></span><svg class="ic-14"><use href="#i-whip"/></svg></div>
              <div class="row l3"><div>Fill &amp; Stroke</div><span class="select"><select aria-label="Fill and Stroke"><option>Per Character Palette</option></select></span><svg class="ic-14"><use href="#i-whip"/></svg></div>
              <div class="row l3"><div>Inter-Character Blending</div><span class="select"><select aria-label="Inter-Character Blending"><option>Normal</option></select></span><svg class="ic-14"><use href="#i-whip"/></svg></div>
              <div class="row l1"><div><svg class="ic-10"><use href="#i-chev"/></svg>Transform</div><a href="#">Reset</a></div>
              <div class="row l2"><div><svg class="ic-14"><use href="#i-watch"/></svg>Anchor Point</div><a href="#">0.0,0.0</a><svg class="ic-14"><use href="#i-whip"/></svg></div>
              <div class="row l2"><div><svg class="ic-14"><use href="#i-watch"/></svg>Position</div><a href="#">960.0,540.0</a><svg class="ic-14"><use href="#i-whip"/></svg></div>
              <div class="row l2"><div><svg class="ic-14"><use href="#i-watch"/></svg>Scale</div><a href="#"><svg class="ic-link"><use href="#i-link"/></svg>100.0,100.0<em>%</em></a><svg class="ic-14"><use href="#i-whip"/></svg></div>
              <div class="row l2"><div><svg class="ic-14"><use href="#i-watch"/></svg>Rotation</div><a href="#">0<em>x</em>+0.0<em>°</em></a><svg class="ic-14"><use href="#i-whip"/></svg></div>
              <div class="row l2"><div><svg class="ic-14"><use href="#i-watch"/></svg>Opacity</div><a href="#">100<em>%</em></a><svg class="ic-14"><use href="#i-whip"/></svg></div>
            </div>
          </div>

          <div class="tl-right">
            <div class="navbar"></div>
            <div class="ruler"><span class="zero">:00s</span><span>01s</span><span>02s</span><span>03s</span><span>04s</span><span>05s</span><span>06s</span><span>07s</span><span>08s</span></div>
            <div class="workarea"></div>
            <div class="cache"></div>
            <div class="layerbar"></div>
            <div class="tracks">
              <div class="tracks-rows">
                <i><svg><use href="#i-key"/></svg></i><i><svg><use href="#i-key"/></svg></i><i><svg><use href="#i-key"/></svg></i><i></i><i></i><i></i>
                <i><svg><use href="#i-key"/></svg></i><i><svg><use href="#i-key"/></svg></i><i><svg><use href="#i-key"/></svg></i><i><svg><use href="#i-key"/></svg></i><i><svg><use href="#i-key"/></svg></i><i><svg><use href="#i-key"/></svg></i>
              </div>
            </div>
            <div class="playhead"><svg viewBox="0 0 16 14"><path d="M3 1h10v5l-5 7-5-7z" fill="#2d8ceb"/><path d="M6 8q2-3 4 0l-2 3z" fill="#9ab"/></svg></div>
          </div>

          <div class="tl-side">
            <svg viewBox="0 0 12 14"><path d="M1 1h10v8l-5 4-5-4z" fill="#9a9a9a"/></svg>
            <svg viewBox="0 0 14 12"><path d="M0 6 5 1v10zM5 2l7-2v12l-7-2z" fill="#9a9a9a"/><circle cx="9" cy="6" r="2.2" fill="#232323"/></svg>
          </div>
        </div>

        <div class="tl-foot">
          <div class="tl-foot-left">
            <button class="on" aria-label="Layer Switches"><svg viewBox="0 0 14 14"><path d="M1 1h7v6H1zM3 3h7v6H3zM6 6h7v7H6zM8 10h3" fill="none" stroke="currentColor" stroke-width="1.3"/></svg></button>
            <button class="on" aria-label="Transfer Controls"><svg viewBox="0 0 14 14"><circle cx="5.5" cy="5" r="4" fill="none" stroke="currentColor" stroke-width="1.4"/><path d="M6 6h7v6H6z" fill="none" stroke="currentColor" stroke-width="1.4"/></svg></button>
            <button aria-label="In/Out"><svg viewBox="0 0 14 14"><path d="M6 1H4v4L2 7l2 2v4h2M8 1h2v4l2 2-2 2v4H8M6 1v12M8 1v12" fill="none" stroke="currentColor" stroke-width="1.6"/></svg></button>
            <button aria-label="Render Time"><svg viewBox="0 0 14 14"><circle cx="5" cy="6" r="4" fill="currentColor"/><path d="M1 11h9q2-1 1-5l2-3" fill="none" stroke="currentColor" stroke-width="2"/></svg></button>
            <p>Frame Render Time <b>1ms</b></p>
          </div>
          <div class="tl-zoom">
            <svg class="small" viewBox="0 0 10 5"><path d="m0 5 3-3 1.500 1L6 1l4 4z" fill="#b5b5b5"/></svg>
            <input type="range" min="0" max="100" value="0" aria-label="Zoom">
            <svg viewBox="0 0 16 8"><path d="m0 8 5-5 2 1.500L9 0l7 8z" fill="#b5b5b5"/></svg>
          </div>
        </div>
      </section>
    </div>
  </div>
</body>
</html>
```
FILE: styles.css
```css
* {
  box-sizing: border-box;
  margin: 0;
  padding: 0;
}

:root {
  --panel: #232323;
  --gap: #161616;
  --field: #161616;
  --line: #2e2e2e;
  --text: #a0a0a0;
  --bright: #c8c8c8;
  --blue: #2d8ceb;
}

body {
  background: #000;
  color: var(--text);
  font-family: "Noto Sans CJK JP", "Noto Sans", sans-serif;
  font-size: 11px;
  line-height: 16px;
  overflow: hidden;
}

.sprite {
  position: absolute;
  width: 0;
  height: 0;
}

button, input, select {
  font: inherit;
  color: inherit;
  background: none;
  border: 0;
  border-radius: 0;
  outline: 0;
}

button {
  display: inline-flex;
  align-items: center;
  justify-content: center;
  white-space: nowrap;
}

a {
  color: var(--blue);
  text-decoration: none;
}

i, em {
  font-style: normal;
}

svg {
  display: block;
  flex: none;
}

.ic-menu { width: 10px; height: 10px; }
.ic-7 { width: 7px; height: 7px; }
.ic-10 { width: 10px; height: 10px; }
.ic-12 { width: 12px; height: 12px; }
.ic-14 { width: 14px; height: 14px; }
.ic-link { width: 14px; height: 10px; }
.ic-search { width: 18px; height: 14px; }

.screen {
  display: flex;
  flex-direction: column;
  height: 100vh;
  margin: 0 124px;
}

/* --- Menu bar --- */
.menubar {
  display: flex;
  justify-content: space-between;
  align-items: center;
  height: 36px;
  padding: 0 16px 0 18px;
  background: #6c8096;
  color: #fff;
  font-family: Inter, "Liberation Sans", sans-serif;
  font-size: 13px;
  font-weight: 500;
}

.menubar a {
  color: #fff;
}

.menubar .app-name {
  font-weight: 700;
}

.menubar-left {
  display: flex;
  align-items: center;
  gap: 18px;
}

.apple {
  width: 14px;
  height: 17px;
}

.menubar-right {
  display: flex;
  align-items: center;
  gap: 14px;
}

.menubar-right svg {
  width: 20px;
  height: 16px;
}

.menubar-right .battery {
  width: 26px;
  height: 12px;
}

.menubar time {
  font-weight: 400;
}

/* --- Window --- */
.app {
  flex: 1;
  display: flex;
  flex-direction: column;
  min-height: 0;
  background: var(--gap);
  border-radius: 8px 8px 0 0;
  overflow: hidden;
}

.titlebar {
  position: relative;
  height: 19px;
  background: #c5c9cb;
  color: #3a3c3e;
}

.titlebar h1 {
  font-family: Inter, "Liberation Sans", sans-serif;
  font-size: 11px;
  font-weight: 400;
  line-height: 19px;
  text-align: center;
}

.lights {
  position: absolute;
  left: 5px;
  top: 5px;
  display: flex;
  gap: 6px;
}

.light {
  width: 9px;
  height: 9px;
  border-radius: 50%;
}

.light.red { background: radial-gradient(#7a1210 22%, #f0524a 30%); }
.light.yellow { background: #d6c22e; }
.light.green { background: #25c139; }

/* --- Toolbar --- */
.toolbar {
  display: flex;
  height: 25px;
  margin-bottom: 1px;
  background: var(--panel);
}

.tools {
  flex: 1;
  display: flex;
  align-items: center;
}

.grip {
  width: 3px;
  height: 18px;
  margin: 0 4px;
  background: repeating-linear-gradient(#3a3a3a 0 1px, transparent 1px 3px);
}

.tool {
  position: relative;
  width: 24px;
  height: 20px;
  color: #b0b0b0;
}

.tool svg {
  width: 16px;
  height: 16px;
}

.tool.on {
  background: #161616;
}

.tool.off {
  color: #4c4c4c;
}

.tool.off.blue {
  color: #1d4670;
}

.tool.glyph {
  font-family: "Liberation Serif", serif;
  font-size: 19px;
  font-weight: 700;
}

.tool.corner::after {
  content: "";
  position: absolute;
  right: 1px;
  bottom: 1px;
  border: 2px solid transparent;
  border-right-color: currentColor;
  border-bottom-color: currentColor;
}

.sep {
  flex: none;
  width: 1px;
  height: 16px;
  margin: 0 3px;
  background: #363636;
}

.tools .sep {
  height: 25px;
  background: #1b1b1b;
}

.tools .sep.far {
  margin: 0 18px 0 24px;
}

.check {
  display: flex;
  align-items: center;
  gap: 4px;
}

input[type="checkbox"] {
  appearance: none;
  display: grid;
  place-items: center;
  width: 14px;
  height: 14px;
  border: 2px solid #858585;
  border-radius: 2px;
}

input[type="checkbox"]:checked {
  background: #858585;
}

input[type="checkbox"]:checked::after {
  content: "";
  width: 4px;
  height: 8px;
  margin-bottom: 2px;
  border: solid #1c1c1c;
  border-width: 0 2px 2px 0;
  transform: rotate(40deg);
}

.snapping {
  margin: 0 1px 0 3px;
}

.workspaces {
  display: flex;
  align-items: center;
  gap: 37px;
  padding-left: 22px;
  border-left: 1px solid #161616;
}

.workspaces a {
  color: #8c8c8c;
}

.workspaces .active {
  display: flex;
  align-items: center;
  gap: 10px;
  margin-right: -18px;
  color: var(--blue);
}

.more {
  color: #c0c0c0;
}

.more svg {
  width: 10px;
  height: 10px;
}

.help {
  display: flex;
  align-items: center;
  gap: 12px;
  margin-left: 10px;
  padding: 0 5px;
  border-left: 1px solid #1b1b1b;
}

.sync {
  width: 18px;
  height: 12px;
}

.help-search {
  display: flex;
  align-items: center;
  gap: 8px;
  width: 187px;
  height: 17px;
  padding-left: 4px;
  background: #131313;
  color: #b4b4b4;
}

.help-search input {
  width: 140px;
}

/* --- Panels --- */
.workspace {
  display: grid;
  grid-template-columns: 311px 468px 1fr 303px;
  grid-template-rows: minmax(0, 1fr);
  gap: 4px;
  flex: 1;
  min-height: 0;
}

.panel {
  min-width: 0;
  background: var(--panel);
}

.tab {
  display: flex;
  align-items: center;
  gap: 8px;
  height: 28px;
  padding: 0 0 2px 12px;
  color: #b8b8b8;
}

.field, .select {
  height: 18px;
  background: var(--field);
  border: 1px solid var(--line);
  border-radius: 2px;
  color: var(--bright);
}

.field {
  padding: 0 5px;
}

.select {
  position: relative;
  display: block;
  background: #1b1b1b;
}

.select select {
  display: block;
  appearance: none;
  width: 100%;
  height: 100%;
  padding: 0 14px 0 5px;
}

.select::after {
  content: "";
  position: absolute;
  top: 50%;
  right: 7px;
  width: 5px;
  height: 5px;
  margin-top: -4px;
  border: solid #b0b0b0;
  border-width: 0 1px 1px 0;
  transform: rotate(45deg);
  pointer-events: none;
}

.swatch {
  flex: none;
  display: block;
  width: 10px;
  height: 10px;
  background: #a99970;
}

.searchbox {
  display: flex;
  align-items: center;
  height: 18px;
  padding-left: 5px;
  background: #151515;
  border: 1px solid #292929;
  border-radius: 2px;
  color: #b0b0b0;
}

.searchbox input {
  flex: 1;
}

/* text preview keeps the tracking of the composition's text layer */
.thumb {
  display: grid;
  place-items: center;
  width: 110px;
  height: 63px;
  background: #000;
  color: #f00000;
  font-family: Inter, "Liberation Sans", sans-serif;
  font-size: 7px;
  font-weight: 600;
  letter-spacing: 0.26em;
}

.thumb.big {
  width: 171px;
  height: 96px;
  padding-bottom: 6px;
  font-size: 11px;
}

/* --- Project --- */
.project {
  display: flex;
  flex-direction: column;
}

.project .searchbox {
  margin: 39px 7px 7px;
}

.project-info {
  display: flex;
  gap: 5px;
  margin-top: 5px;
  padding-left: 7px;
}

.info-lines {
  margin-top: -2px;
}

.info-lines p {
  display: flex;
  align-items: center;
  gap: 2px;
  line-height: 13px;
}

.bright {
  color: var(--bright);
}

.files {
  width: 309px;
  margin-left: 2px;
  border-collapse: collapse;
  table-layout: fixed;
}

.files tr {
  height: 18px;
  border-top: 1px solid #1b1b1b;
  border-bottom: 1px solid #1b1b1b;
}

.files th {
  font-weight: 400;
  text-align: left;
}

.files .c-name { width: 249px; }
.files .c-tag { width: 27px; padding-left: 6px; }

.files th.c-name div {
  display: flex;
  align-items: center;
  justify-content: space-between;
  padding: 0 3px 0 20px;
}

.sort {
  border: solid transparent;
  border-width: 0 6px 5px;
  border-bottom-color: var(--blue);
}

.file {
  display: flex;
  align-items: center;
  padding-left: 15px;
}

.ic-comp {
  width: 16px;
  height: 13px;
}

.file b {
  flex: 1;
  height: 17px;
  padding-left: 3px;
  background: #969696;
  color: #1e1e1e;
  font-weight: 700;
}

.clip {
  display: flex;
}

.clip span {
  width: 17px;
}

.flow {
  width: 13px;
  height: 12px;
  margin-top: 1px;
  color: #b8b8b8;
}

.project-foot {
  display: flex;
  align-items: center;
  height: 19px;
  margin-top: auto;
  padding-left: 1px;
  border-top: 2px solid #1a1a1a;
}

.project-foot button {
  width: 24px;
  color: #b0b0b0;
}

.project-foot svg {
  width: 16px;
  height: 12px;
}

.project-foot .depth {
  width: 43px;
  height: 16px;
  margin: 0 0 0 2px;
  background: #1b1b1b;
  color: var(--text);
}

.pill {
  width: 35px;
  height: 14px;
  margin-left: 3px;
  border-radius: 7px;
  background: #2e2e2e;
}

/* --- Essential Graphics --- */
.graphics {
  display: flex;
  flex-direction: column;
  border: 1px solid #2d7bd4;
}

.graphics .tab {
  height: 27px;
  padding: 0 0 4px 10px;
}

.graphics-head {
  display: flex;
  justify-content: space-between;
  padding: 7px 7px 0;
}

.graphics-form {
  display: grid;
  grid-template-columns: auto 219px;
  grid-auto-rows: 18px;
  align-items: center;
  gap: 8px 6px;
  text-align: right;
}

.wide {
  grid-column: 2;
  height: 18px;
  background: #1d1d1d;
  border: 1px solid #292929;
  border-radius: 2px;
}

.graphics-list {
  flex: 1;
  display: flex;
  flex-direction: column;
  justify-content: space-between;
  margin: 19px 7px 8px;
  background: #1c1c1c;
  border: 1px solid #272727;
}

.graphics-item {
  position: relative;
  display: flex;
  align-items: center;
  height: 32px;
  padding-left: 26px;
  border-bottom: 1px solid #242424;
}

.graphics-item .field {
  width: 162px;
  margin-right: 12px;
}

.graphics-item .field.light {
  width: 186px;
  margin-right: 20px;
  background: #e2e4e3;
  border-color: #f4f4f4;
  color: #1b1b1b;
}

.graphics-item a {
  flex: 1;
  white-space: nowrap;
}

.cursor {
  position: absolute;
  right: -4px;
  top: 24px;
  width: 22px;
  height: 26px;
}

.hscroll {
  width: 93%;
  height: 10px;
  border-radius: 5px;
  background: #2a2a2a;
}

.graphics-foot {
  display: flex;
  justify-content: space-between;
  padding: 0 7px 14px;
}

.graphics-foot .select {
  width: 123px;
  border-color: #232323;
}

.export {
  width: 199px;
  height: 18px;
  padding-bottom: 1px;
  border: 2px solid #7c7c7c;
  border-radius: 9px;
}

/* --- Composition --- */
.comp {
  display: flex;
  flex-direction: column;
}

.comp .tab {
  gap: 8px;
  padding-left: 8px;
}

.comp .tab a {
  margin: 0 0 0 -4px;
}

.close {
  width: 8px;
  color: #8c8c8c;
}

.white {
  color: #e4e4e4;
}

.comp-nav {
  height: 23px;
  padding: 1px 18px;
}

.comp-nav button {
  width: 95px;
  height: 17px;
  padding-left: 7px;
  justify-content: flex-start;
  background: #191919;
  border: 1px solid #292929;
  color: var(--blue);
}

.viewer {
  flex: 1;
  display: flex;
  margin-bottom: 5px;
  padding: 18px 0;
  background: #1b1b1b;
  border-top: 2px solid #161616;
}

.canvas {
  position: relative;
  flex: 1;
  background: #000;
}

/* selected text layer, placed on the composition canvas */
.title-layer {
  position: absolute;
  left: 50%;
  top: 50%;
  width: 422px;
  height: 52px;
  margin: -44px 0 0 -204px;
  color: #f00;
  font-family: Inter, "Liberation Sans", sans-serif;
  font-size: 59px;
  font-weight: 800;
  line-height: 52px;
  letter-spacing: 0.26em;
  white-space: nowrap;
}

.h {
  position: absolute;
  width: 8px;
  height: 8px;
  background: #b8202a;
}

.h.tl, .h.tc, .h.tr { top: 0; }
.h.ml, .h.mr { top: 22px; }
.h.bl, .h.bc, .h.br { bottom: 0; }
.h.tl, .h.ml, .h.bl { left: 0; }
.h.tc, .h.bc { left: 207px; }
.h.tr, .h.mr, .h.br { right: 0; }

.anchor {
  position: absolute;
  left: 50%;
  top: 50%;
  width: 18px;
  height: 18px;
  margin: -9px -10px;
}

.comp-foot {
  display: flex;
  align-items: center;
  height: 22px;
  padding-left: 5px;
}

.comp-foot .sep {
  margin: 0 5px;
}

.w66 { width: 66px; }
.w84 { width: 84px; }

.comp-icons {
  display: flex;
  gap: 1px;
}

.comp-icons button {
  width: 20px;
  height: 18px;
  color: #b0b0b0;
}

.comp-icons svg {
  width: 15px;
  height: 14px;
}

.comp-icons .dark { background: #181818; }
.comp-icons .dim { color: #484848; }

.exposure {
  width: 32px;
  margin-left: 2px;
}

.timebox {
  width: 66px;
  height: 17px;
  background: #1b1b1b;
}

/* --- Properties --- */
.props {
  display: flex;
  justify-content: space-between;
  overflow: hidden;
}

.props-body {
  flex: 1;
  display: flex;
  flex-direction: column;
  align-items: flex-start;
  padding: 0 14px 0 11px;
}

.props-body > * {
  flex: none;
}

.props .tab {
  align-self: stretch;
  justify-content: space-between;
  margin-right: -5px;
  padding-left: 1px;
}

.vscroll {
  width: 14px;
  padding: 1px 4px 0 1px;
  background: #1c1c1c;
}

.vscroll i {
  display: block;
  height: 394px;
  border-radius: 5px;
  background: #2e2e2e;
}

.xform {
  display: grid;
  grid-template-columns: 136px 1fr;
  grid-template-rows: 18px;
  align-content: start;
  align-self: stretch;
  height: 122px;
  border-bottom: 2px solid #161616;
}

.xform h2, .section-head {
  color: var(--text);
  font-size: 11px;
  font-weight: 500;
}

.xrow {
  grid-column: 1 / -1;
  display: grid;
  grid-template-columns: 46px 67px 21px 38px 38px;
  align-items: center;
  height: 19px;
}

.xrow > svg:first-child {
  margin-left: 11px;
}

.xrow b, .chars b {
  padding-left: 2px;
  border-bottom: 1px solid #4a4a4a;
  color: var(--blue);
  font-weight: 400;
}

.xrow b + b {
  margin: 0 -11px 0 11px;
}

.xrow em, .chars em {
  color: var(--text);
}

.props .ic-link {
  color: var(--blue);
}

.section-head {
  display: flex;
  align-items: center;
  align-self: stretch;
  justify-content: space-between;
  height: 30px;
  padding-right: 3px;
}

.select.font {
  width: 221px;
  height: 19px;
  margin-bottom: 8px;
}

.select.split {
  background: linear-gradient(90deg, #151515 202px, #2a2a2a 202px 203px, #1b1b1b 203px);
}

.chars {
  display: grid;
  grid-template-columns: 43px 50px 30px 43px 50px 16px;
  grid-auto-rows: 26px;
  align-items: center;
}

.chars b {
  line-height: 17px;
}

.chars .ic-7 {
  margin-left: 3px;
}

.chars .gi {
  width: 18px;
  height: 18px;
  margin-right: 3px;
  justify-self: center;
  color: #b0b0b0;
}

.chars span.gi {
  display: flex;
  align-items: baseline;
  justify-content: center;
  line-height: 18px;
  font-family: "DejaVu Serif", serif;
}

.gi small { font-size: 11px; }
.gi big { font-size: 17px; }
.chars .ic-updown { width: 6px; height: 14px; }

.chars s {
  color: #555;
  text-decoration: none;
}

.paints {
  display: grid;
  grid-template-columns: 33px 88px 1fr;
  grid-auto-rows: 19px;
  align-items: center;
  padding: 1px 0 0 13px;
}

.paints label {
  display: flex;
  align-items: center;
  gap: 6px;
}

.chip {
  width: 16px;
  height: 16px;
  border: 1px solid #8c8c8c;
  background: #e00505;
}

.chip.none {
  background: linear-gradient(to bottom right, #fff 45%, #e00505 45% 55%, #fff 55%);
}

.caps {
  display: flex;
  gap: 13px;
  margin: 5px 0 8px 43px;
}

.pair {
  display: flex;
}

.pair button {
  width: 39px;
  height: 21px;
  background: #191919;
  border: 1px solid #292929;
  color: #b0b0b0;
  font-family: "DejaVu Serif", serif;
  font-size: 13px;
}

.pair small { font-size: 10px; }
.pair sup, .pair sub { font-size: 7px; line-height: 0; }

.pair svg {
  width: 16px;
  height: 12px;
}

.pair .on {
  color: var(--blue);
}

.opts {
  display: flex;
  padding-left: 13px;
}

.opts label {
  width: 121px;
  height: 20px;
}

.less {
  gap: 6px;
  width: 59px;
  height: 26px;
  margin: 2px 0 6px 7px;
  border: 1px solid #282828;
}

.less svg {
  width: 16px;
  height: 4px;
  fill: #c0c0c0;
}

.less.last {
  margin-top: 9px;
}

.section-head.para {
  border-top: 2px solid #161616;
  height: 33px;
}

.aligns {
  display: flex;
  margin-left: 7px;
}

.aligns button {
  width: 31px;
  height: 21px;
  background: #191919;
  border: 1px solid #282828;
  color: #a8a8a8;
}

.aligns svg {
  width: 15px;
  height: 14px;
}

.aligns .on { color: var(--blue); }
.aligns button:disabled { background: #212121; color: #46494d; }

.chars.indents {
  margin-top: 2px;
}

.chars.first {
  grid-auto-rows: 19px;
}

.caps.dirs {
  margin-bottom: 0;
}

/* --- Timeline --- */
.timeline {
  display: flex;
  flex-direction: column;
  height: 358px;
  margin-top: 3px;
  padding-top: 2px;
}

.timeline > .tab {
  gap: 9px;
  height: 26px;
  padding: 0 0 2px 9px;
}

.timeline .tab span {
  color: var(--bright);
}

.tl-main {
  flex: 1;
  display: grid;
  grid-template-columns: 877px 1fr 20px;
  border-bottom: 2px solid #161616;
}

.tl-left {
  border-right: 2px solid #161616;
}

.tl-top {
  display: flex;
  align-items: center;
  height: 33px;
  padding-left: 13px;
}

.timecode {
  display: flex;
  flex-direction: column;
  width: 85px;
  color: var(--blue);
  white-space: nowrap;
}

.timecode strong {
  font-size: 14px;
  font-weight: 500;
  line-height: 18px;
}

.timecode span {
  color: #1f5d9c;
  font-size: 10px;
  line-height: 14px;
}

.tl-top .searchbox {
  width: 617px;
}

.tl-tools {
  display: flex;
  gap: 3px;
  padding-left: 12px;
}

.tl-tools button {
  width: 22px;
  height: 18px;
  color: #b0b0b0;
}

.tl-tools .gap {
  margin-left: 8px;
}

.tl-tools svg {
  width: 16px;
  height: 14px;
}

.cols {
  display: grid;
  grid-template-columns: 66px 62px 146px 132px 140px 170px 31px 1fr;
  align-items: center;
  margin-left: 2px;
}

.cols > div {
  display: flex;
  align-items: center;
  height: 100%;
}

.head {
  height: 20px;
  font-size: 10px;
  border-top: 1px solid #1d1d1d;
}

.head .ic-12, .head .ic-14 {
  color: #b8b8b8;
}

.cols .c-av {
  gap: 2px;
  padding-left: 3px;
}

.dot {
  width: 7px;
  height: 7px;
  margin: 0 3px;
  border-radius: 50%;
  background: #b8b8b8;
}

.head .c-label {
  gap: 12px;
  padding-left: 12px;
  border-left: 1px solid #161616;
}

.head .c-source, .head .c-mode, .head .c-parent {
  padding-left: 4px;
  border-left: 1px solid #161616;
}

.head .c-switch, .layer .c-switch {
  gap: 1px;
  padding-left: 4px;
  color: #b8b8b8;
}

.c-switch > * {
  width: 13px;
  height: 12px;
}

.fx {
  font-family: "Liberation Serif", serif;
  font-size: 13px;
  font-style: italic;
  line-height: 12px;
}

.head .c-switch {
  border-left: 1px solid #161616;
}

.t {
  width: 16px;
}

.head .c-matte {
  padding-left: 7px;
}

.c-inv {
  gap: 3px;
}

.layer {
  height: 16px;
  background: #3c3c3c;
  color: var(--bright);
}

.cell {
  width: 13px;
  height: 13px;
  background: #2c2c2c;
}

.layer .c-av > i {
  width: 12px;
}

.layer .c-label {
  gap: 2px;
  padding-left: 4px;
}

.redbox {
  width: 12px;
  height: 12px;
  background: #ae3334;
}

.layer .c-label b {
  margin-left: 8px;
  color: #a8a8a8;
}

.serif {
  width: 18px;
  padding-left: 3px;
  font-family: "DejaVu Serif", serif;
  font-weight: 700;
}

.layer .c-source b {
  flex: 1;
  height: 16px;
  padding-left: 3px;
  background: #8f8f8f;
  color: #1e1e1e;
  line-height: 15px;
}

.layer .dim {
  color: #777;
}

.layer .select {
  height: 16px;
  border: 0;
}

.layer .c-mode {
  padding: 0 3px 0 4px;
}

.layer .c-mode .select, .layer .c-matte .select {
  flex: 1;
}

.layer .c-matte {
  gap: 4px;
  padding: 0 1px 0 2px;
}

.layer .c-parent {
  gap: 5px;
  padding-left: 3px;
}

.layer .c-parent .select {
  width: 87px;
}

.rows {
  display: grid;
  grid-template-rows: repeat(12, 1fr);
  height: 197px;
  margin-left: 2px;
}

.row {
  display: flex;
  align-items: center;
  min-height: 0;
  border-bottom: 1px solid #1b1b1b;
  line-height: 15px;
}

.row > div {
  display: flex;
  align-items: center;
  gap: 6px;
  width: 279px;
}

.row.l1 > div { gap: 7px; padding-left: 86px; }
.row.l2 > div { padding-left: 115px; }
.row.sub > div { gap: 7px; padding-left: 102px; }
.row.l3 > div { padding-left: 135px; }

.row > .ic-14 {
  margin: 0 97px 0 auto;
}

.row a {
  display: flex;
  align-items: center;
}

.row em {
  color: var(--text);
}

.row .ic-link {
  margin: 0 4px 0 -1px;
  background: #181818;
  color: #b0b0b0;
}

.row .select {
  width: 129px;
  height: 15px;
  border: 0;
}

.row .select select {
  padding: 0 12px 0 5px;
}

.row .select::after {
  right: 4px;
}

.animate {
  display: flex;
  align-items: center;
  gap: 1px;
  margin-left: 66px;
}

.animate svg {
  width: 12px;
  height: 12px;
}

/* time graph: a short lead-in on the left, then the 8 seconds */
.tl-right {
  position: relative;
  display: flex;
  flex-direction: column;
}

.navbar, .workarea {
  border: solid var(--blue);
  border-width: 0 5px;
  border-radius: 5px;
  background: #5a5a5a;
}

.navbar {
  height: 8px;
  margin-top: 5px;
}

.ruler {
  display: grid;
  grid-template-columns: repeat(8, 1fr) 0;
  height: 20px;
  margin: 0 5px 1px 8px;
}

.ruler span {
  position: relative;
  justify-self: start;
  display: flex;
  justify-content: center;
  width: 0;
  line-height: 16px;
}

.ruler span:not(.zero)::after {
  content: "";
  position: absolute;
  bottom: 0;
  width: 1px;
  height: 4px;
  background: #8c8c8c;
}

.workarea {
  height: 14px;
}

.cache {
  height: 3px;
  margin: 1px 5px 1px 8px;
  background: #12c712;
}

.layerbar {
  height: 16px;
  margin: 0 5px 0 8px;
  background: linear-gradient(#b0504e, #a04040 30%, #963c3c);
}

.tracks {
  flex: 1;
  margin: 0 5px 0 8px;
  background: #263138;
}

.tracks-rows {
  position: relative;
  z-index: 1;
  display: grid;
  grid-template-rows: repeat(12, 1fr);
  height: 197px;
}

.tracks-rows i {
  min-height: 0;
  border-bottom: 1px solid #191f23;
}

.tracks-rows svg {
  width: 8px;
  height: 14px;
  margin: 1px -4px;
}

.playhead {
  position: absolute;
  left: 0;
  top: 19px;
  bottom: 0;
  width: 16px;
  background: linear-gradient(90deg, transparent 7px, #2d7cd0 7px 9px, transparent 9px);
}

.playhead svg {
  width: 16px;
  height: 14px;
}

.tl-side {
  display: flex;
  flex-direction: column;
  align-items: center;
  gap: 6px;
  padding-top: 35px;
}

.tl-side svg {
  width: 12px;
  height: 13px;
}

.tl-foot {
  display: grid;
  grid-template-columns: 877px 1fr;
  align-items: center;
  height: 17px;
}

.tl-foot-left {
  display: flex;
  align-items: center;
  padding-left: 5px;
}

.tl-foot button {
  width: 18px;
  height: 16px;
  color: #b0b0b0;
}

.tl-foot .on {
  background: #191919;
  color: var(--blue);
}

.tl-foot button svg {
  width: 12px;
  height: 12px;
}

.tl-foot p {
  margin-left: 25px;
  line-height: 15px;
}

.tl-foot p b {
  color: #3fd0a8;
  font-weight: 500;
}

.tl-zoom {
  display: flex;
  align-items: center;
  gap: 10px;
  padding-left: 5px;
}

.tl-zoom svg {
  width: 16px;
  height: 8px;
}

.tl-zoom .small {
  width: 10px;
  height: 5px;
}

.tl-zoom input {
  appearance: none;
  width: 48px;
  height: 2px;
  background: #3c3c3c;
}

.tl-zoom input::-webkit-slider-thumb {
  appearance: none;
  width: 10px;
  height: 10px;
  border: 2px solid #a0a0a0;
  border-radius: 50%;
  background: var(--panel);
}
```
